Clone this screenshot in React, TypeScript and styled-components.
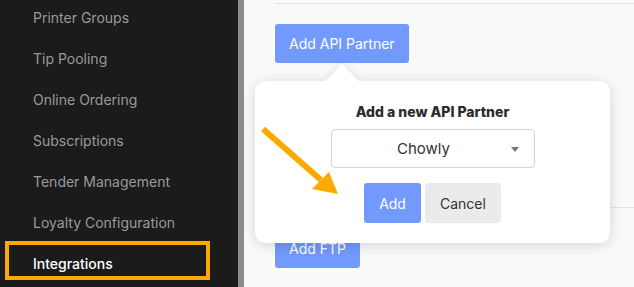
import React, { useState } from "react";
import styled, { createGlobalStyle } from "styled-components";

const GlobalStyle = createGlobalStyle`
  html, body {
    margin: 0;
    padding: 0;
    width: 634px;
    height: 287px;
    overflow: hidden;
    background: #fafafa;
    font-family: "Inter", "Liberation Sans", sans-serif;
  }
  #root {
    height: 287px;
  }
`;

const Page = styled.div`
  display: flex;
  height: 287px;
  position: relative;
  overflow: hidden;
`;

const Sidebar = styled.nav`
  width: 238px;
  flex-shrink: 0;
  background: #1b1b1b;
  border-right: 6px solid #898c8e;
  display: flex;
  flex-direction: column;
  margin-top: -3px;
`;

const NavItem = styled.div<{ $active?: boolean }>`
  height: 41px;
  display: flex;
  align-items: center;
  padding-left: 33px;
  font-size: 14px;
  color: ${(p) => (p.$active ? "#ffffff" : "#9a9a9a")};
  font-weight: ${(p) => (p.$active ? 500 : 400)};
  box-sizing: border-box;
  flex-shrink: 0;
  ${(p) =>
    p.$active &&
    `
    height: 39px;
    margin: -2px 28px 0 5px;
    padding: 6px 0 0 24px;
    border: 4px solid #f9a901;
  `}
`;

const Content = styled.main`
  flex: 1;
  padding: 3px 0 0 31px;
  display: flex;
  flex-direction: column;
`;

const Section = styled.section<{ $first?: boolean }>`
  border-top: 1px solid #e4e4e4;
  padding: ${(p) => (p.$first ? "20px 0 0" : "21px 0 0")};
  height: ${(p) => (p.$first ? "204px" : "auto")};
  box-sizing: border-box;
`;

const Anchor = styled.div`
  position: relative;
  display: inline-block;
`;

const PrimaryButton = styled.button<{ $w?: number }>`
  height: 39px;
  padding: 0 ${(p) => (p.$w ?? 15)}px;
  border: none;
  border-radius: 3px;
  background: #729afc;
  color: #ffffff;
  font-family: inherit;
  font-size: 14px;
  cursor: pointer;
`;

const Popover = styled.div`
  position: absolute;
  left: -20px;
  top: calc(100% + 18px);
  width: 355px;
  box-sizing: border-box;
  padding: 21px 0 20px;
  background: #ffffff;
  border-radius: 10px;
  box-shadow: 0 2px 14px rgba(0, 0, 0, 0.16);
  display: flex;
  flex-direction: column;
  align-items: center;
  z-index: 5;

  &::before {
    content: "";
    position: absolute;
    left: 75px;
    top: -12px;
    width: 24px;
    height: 24px;
    background: #ffffff;
    transform: rotate(45deg);
    box-shadow: -3px -3px 6px rgba(0, 0, 0, 0.06);
  }
`;

const PopTitle = styled.h3`
  margin: 0;
  font-size: 14px;
  line-height: 20px;
  font-weight: 800;
  color: #2b2b2b;
  position: relative;
`;

const SelectBox = styled.div`
  margin-top: 7px;
  width: 204px;
  height: 39px;
  box-sizing: border-box;
  border: 1px solid #d4d4d4;
  border-radius: 4px;
  display: flex;
  align-items: center;
  justify-content: center;
  position: relative;
  font-size: 15px;
  color: #333333;
  padding-right: 18px;
`;

const Caret = styled.span`
  position: absolute;
  right: 15px;
  top: 17px;
  width: 0;
  height: 0;
  border-left: 4px solid transparent;
  border-right: 4px solid transparent;
  border-top: 5px solid #777777;
`;

const ButtonRow = styled.div`
  margin-top: 15px;
  display: flex;
  gap: 4px;
`;

const ActionButton = styled.button<{ $kind: "primary" | "secondary" }>`
  height: 40px;
  border: none;
  border-radius: 3px;
  padding: 0 15px;
  font-family: inherit;
  font-size: 14px;
  cursor: pointer;
  background: ${(p) => (p.$kind === "primary" ? "#729afc" : "#ebebeb")};
  color: ${(p) => (p.$kind === "primary" ? "#ffffff" : "#333333")};
`;

const ArrowMark = styled.svg`
  position: absolute;
  left: 255px;
  top: 120px;
  z-index: 10;
  pointer-events: none;
`;

const navItems = [
  "Printer Groups",
  "Tip Pooling",
  "Online Ordering",
  "Subscriptions",
  "Tender Management",
  "Loyalty Configuration",
  "Integrations",
];

const App = () => {
  const [active] = useState("Integrations");
  return (
    <>
      <GlobalStyle />
      <Page>
        <Sidebar>
          {navItems.map((item) => (
            <NavItem key={item} $active={item === active}>
              {item}
            </NavItem>
          ))}
        </Sidebar>
        <Content>
          <Section $first>
            <Anchor>
              <PrimaryButton $w={14}>Add API Partner</PrimaryButton>
              <Popover>
                <PopTitle>Add a new API Partner</PopTitle>
                <SelectBox>
                  Chowly
                  <Caret />
                </SelectBox>
                <ButtonRow>
                  <ActionButton $kind="primary">Add</ActionButton>
                  <ActionButton $kind="secondary">Cancel</ActionButton>
                </ButtonRow>
              </Popover>
            </Anchor>
          </Section>
          <Section>
            <PrimaryButton $w={14}>Add FTP</PrimaryButton>
          </Section>
        </Content>
        <ArrowMark width="100" height="85" viewBox="0 0 100 85">
          <line
            x1="8"
            y1="9"
            x2="66"
            y2="60"
            stroke="#fbaa00"
            strokeWidth="6"
            strokeLinecap="butt"
          />
          <polygon points="57,69 83,74 74,52" fill="#fbaa00" />
        </ArrowMark>
      </Page>
    </>
  );
};

export default App;
